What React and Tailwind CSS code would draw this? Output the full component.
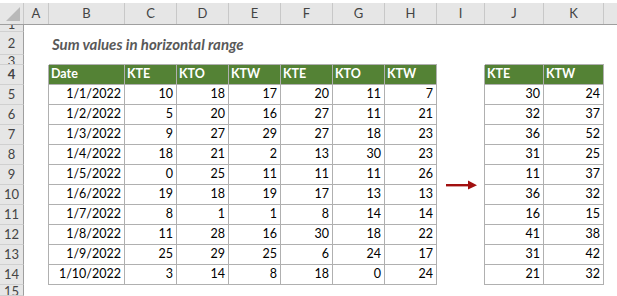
import React from "react";

const cols = ["A", "B", "C", "D", "E", "F", "G", "H", "I", "J", "K"];
const colW = [
  "w-[25px]",
  "w-[76px]",
  "w-[52px]",
  "w-[52px]",
  "w-[52px]",
  "w-[52px]",
  "w-[52px]",
  "w-[52px]",
  "w-[48px]",
  "w-[59px]",
  "w-[60px]",
];

const left = [
  ["1/1/2022", 10, 18, 17, 20, 11, 7],
  ["1/2/2022", 5, 20, 16, 27, 11, 21],
  ["1/3/2022", 9, 27, 29, 27, 18, 23],
  ["1/4/2022", 18, 21, 2, 13, 30, 23],
  ["1/5/2022", 0, 25, 11, 11, 11, 26],
  ["1/6/2022", 19, 18, 19, 17, 13, 13],
  ["1/7/2022", 8, 1, 1, 8, 14, 14],
  ["1/8/2022", 11, 28, 16, 30, 18, 22],
  ["1/9/2022", 25, 29, 25, 6, 24, 17],
  ["1/10/2022", 3, 14, 8, 18, 0, 24],
];

const right = [
  [30, 24],
  [32, 37],
  [36, 52],
  [31, 25],
  [11, 37],
  [36, 32],
  [16, 15],
  [41, 38],
  [31, 42],
  [21, 32],
];

const leftHead = ["Date", "KTE", "KTO", "KTW", "KTE", "KTO", "KTW"];
const rightHead = ["KTE", "KTW"];

function RowHead({ n, h, align = "items-center" }) {
  return (
    <div
      className={`w-[24px] shrink-0 ${h} flex justify-center ${align} overflow-hidden bg-[#e6e6e6] border-r border-b border-r-[#9f9f9f] border-b-[#d0d0d0] text-[13px] leading-none text-[#444]`}
    >
      {n}
    </div>
  );
}

function Arrow() {
  return (
    <svg width="32" height="10" viewBox="0 0 32 10" className="absolute left-[9px] bottom-[-5px]">
      <rect x="0" y="4" width="23" height="2.4" fill="#a10f0f" />
      <polygon points="22,0.5 31,5.2 22,9.5" fill="#a10f0f" />
    </svg>
  );
}

function DataRow({ r, i }) {
  return (
    <div className="flex h-[20px]">
      <RowHead n={i + 5} h="h-[20px]" />
      <div className={`${colW[0]} shrink-0 border-r border-[#b0b0b0]`} />
      {r.map((v, j) => (
        <div
          key={j}
          className={`${colW[j + 1]} shrink-0 border-r border-b border-[#b0b0b0] flex items-center justify-end pr-[3px]`}
        >
          {v}
        </div>
      ))}
      <div className={`${colW[8]} shrink-0 relative border-r border-[#b0b0b0]`}>
        {i === 4 && <Arrow />}
      </div>
      {right[i].map((v, j) => (
        <div
          key={j}
          className={`${colW[9 + j]} shrink-0 border-r border-b border-[#b0b0b0] flex items-center justify-end pr-[3px]`}
        >
          {v}
        </div>
      ))}
    </div>
  );
}

export default function App() {
  return (
    <div className="w-[617px] h-[296px] overflow-hidden bg-white font-['Lato',sans-serif] text-[12.5px] text-black">
      <div className="h-[3px]" />
      {/* column letters */}
      <div className="flex h-[22px] bg-[#e6e6e6] border-b border-[#9f9f9f]">
        <div className="w-[24px] shrink-0 relative border-r border-[#c8c8c8]">
          <svg width="14" height="14" viewBox="0 0 14 14" className="absolute right-[3px] bottom-[3px]">
            <polygon points="14,0 14,14 0,14" fill="#b9b9b9" />
          </svg>
        </div>
        {cols.map((c, i) => (
          <div
            key={c}
            className={`${colW[i]} shrink-0 flex items-center justify-center border-r border-[#c8c8c8] text-[13px] text-[#444]`}
          >
            {c}
          </div>
        ))}
        <div className="flex-1" />
      </div>

      {/* row 1 */}
      <div className="flex h-[7px]">
        <RowHead n={1} h="h-[7px]" align="items-end" />
      </div>

      {/* row 2 - title */}
      <div className="flex h-[23px]">
        <RowHead n={2} h="h-[23px]" />
        <div className="w-[25px] shrink-0" />
        <div className="flex items-end pb-[1px] pl-[3px] whitespace-nowrap font-bold italic text-[15px] leading-[20px] text-[#595959]">
          Sum values in horizontal range
        </div>
      </div>

      {/* row 3 */}
      <div className="flex h-[10px]">
        <RowHead n={3} h="h-[10px]" align="items-start" />
        <div className="w-[25px] shrink-0" />
        <div className="w-[388px] shrink-0 border-b border-[#b0b0b0]" />
        <div className="w-[48px] shrink-0" />
        <div className="w-[119px] shrink-0 border-b border-[#b0b0b0]" />
      </div>

      {/* row 4 - headers */}
      <div className="flex h-[20px] font-bold text-white">
        <RowHead n={4} h="h-[20px]" />
        <div className={`${colW[0]} shrink-0 border-r border-[#b0b0b0]`} />
        {leftHead.map((h, j) => (
          <div
            key={j}
            className={`${colW[j + 1]} shrink-0 bg-[#548235] border-r border-b border-[#b0b0b0] flex items-center pl-[2px]`}
          >
            {h}
          </div>
        ))}
        <div className={`${colW[8]} shrink-0 border-r border-[#b0b0b0]`} />
        {rightHead.map((h, j) => (
          <div
            key={j}
            className={`${colW[9 + j]} shrink-0 bg-[#548235] border-r border-b border-[#b0b0b0] flex items-center pl-[2px]`}
          >
            {h}
          </div>
        ))}
      </div>

      {left.map((r, i) => (
        <DataRow key={i} r={r} i={i} />
      ))}

      {/* row 15 */}
      <div className="flex h-[11px]">
        <RowHead n={15} h="h-[11px]" align="items-start" />
      </div>
    </div>
  );
}
